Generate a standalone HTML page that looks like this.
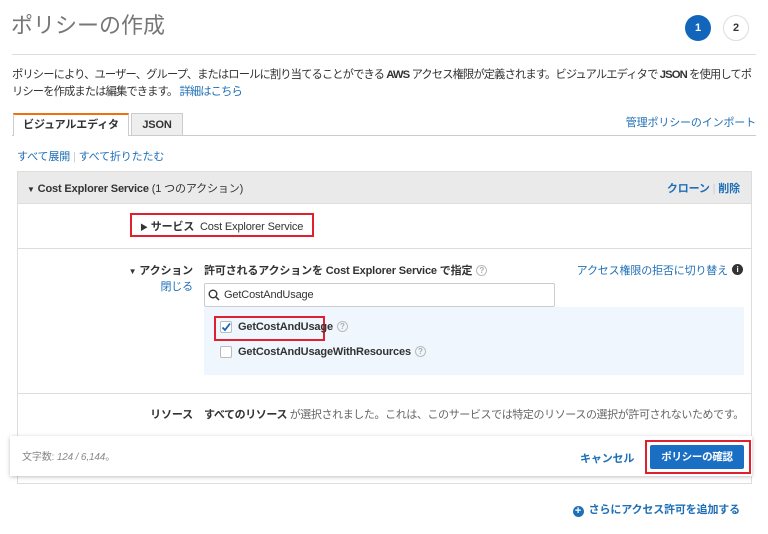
<!DOCTYPE html>
<html><head><meta charset="utf-8"><style>
*{margin:0;padding:0;box-sizing:border-box}
body{width:768px;height:534px;background:#fff;font-family:"Liberation Sans","Noto Sans CJK JP",sans-serif;color:#333;position:relative;overflow:hidden;font-size:11px;letter-spacing:-0.15px}
.a{position:absolute;white-space:nowrap}
.link{color:#1f6fb6}
.b{font-weight:bold}
.q{display:inline-block;width:11px;height:11px;border:1px solid #bbb;border-radius:50%;font-size:8px;color:#aaa;text-align:center;line-height:9px;vertical-align:1px;margin-left:4px;letter-spacing:0}
</style></head><body>
<div class="a" style="left:11px;top:8px;font-size:22px;color:#777;letter-spacing:0">ポリシーの作成</div>
<div class="a" style="left:685px;top:15px;width:26px;height:26px;border-radius:50%;background:#1166bb;color:#fff;font-size:11px;font-weight:bold;text-align:center;line-height:26px">1</div>
<div class="a" style="left:723px;top:15px;width:26px;height:26px;border-radius:50%;border:1px solid #ddd;color:#333;font-size:11px;font-weight:bold;text-align:center;line-height:24px">2</div>
<div class="a" style="left:12px;top:54px;width:744px;height:1px;background:#ddd"></div>
<div class="a" style="left:12px;top:67px;font-size:11.3px;line-height:17px;letter-spacing:-0.9px">ポリシーにより、ユーザー、グループ、またはロールに割り当てることができる <b>AWS</b> アクセス権限が定義されます。ビジュアルエディタで <b>JSON</b> を使用してポ<br>リシーを作成または編集できます。 <span class="link">詳細はこちら</span></div>
<div class="a" style="left:12px;top:135px;width:744px;height:1px;background:#ccc"></div>
<div class="a" style="left:13px;top:113px;width:116px;height:23px;border:1px solid #ccc;border-top:2px solid #ec7211;border-bottom:none;background:#fff;text-align:center;line-height:21px;font-weight:bold;font-size:11px">ビジュアルエディタ</div>
<div class="a" style="left:131px;top:113px;width:52px;height:22px;border:1px solid #ccc;border-bottom:none;background:#eee;text-align:center;line-height:22px;font-weight:bold;font-size:11px">JSON</div>
<div class="a link" style="right:12px;top:114px">管理ポリシーのインポート</div>
<div class="a link" style="left:17px;top:148px">すべて展開 <span style="color:#ccc">|</span> すべて折りたたむ</div>
<div class="a" style="left:17px;top:171px;width:735px;height:313px;border:1px solid #ddd"></div>
<div class="a" style="left:17px;top:171px;width:735px;height:33px;background:#eaeaea;border:1px solid #ddd"></div>
<div class="a b" style="left:27px;top:180px;font-size:11px"><span style="font-size:8px">▼</span> Cost Explorer Service <span style="font-weight:normal">(1 つのアクション)</span></div>
<div class="a b link" style="right:28px;top:180px">クローン <span style="color:#ccc;font-weight:normal">|</span> 削除</div>
<div class="a" style="left:130px;top:213px;width:184px;height:24px;border:2px solid #e0202e"></div>
<div class="a" style="left:140px;top:218px;font-size:11px"><span style="font-size:8px">▶</span> <b>サービス</b> &nbsp;Cost Explorer Service</div>
<div class="a" style="left:17px;top:248px;width:735px;height:1px;background:#ddd"></div>
<div class="a b" style="right:575px;top:262px"><span style="font-size:8px">▼</span> アクション</div>
<div class="a link" style="right:575px;top:278px">閉じる</div>
<div class="a b" style="left:204px;top:262px">許可されるアクションを Cost Explorer Service で指定<span class="q">?</span></div>
<div class="a link" style="right:40px;top:262px">アクセス権限の拒否に切り替え</div>
<div class="a" style="left:732px;top:264px;width:11px;height:11px;border-radius:50%;background:#333;color:#fff;font-size:8px;font-weight:bold;text-align:center;line-height:11px">i</div>
<div class="a" style="left:204px;top:283px;width:351px;height:24px;border:1px solid #ccc;border-radius:2px"></div>
<svg class="a" style="left:208px;top:289px" width="12" height="12" viewBox="0 0 12 12"><circle cx="5" cy="5" r="3.8" fill="none" stroke="#333" stroke-width="1.4"/><path d="M8 8l3 3" stroke="#333" stroke-width="1.5"/></svg>
<div class="a" style="left:224px;top:289px">GetCostAndUsage</div>
<div class="a" style="left:204px;top:307px;width:540px;height:68px;background:#eff6fd"></div>
<div class="a" style="left:214px;top:316px;width:111px;height:25px;border:2px solid #e0202e"></div>
<div class="a" style="left:220px;top:321px;width:12px;height:12px;border:1px solid #bbb;background:#fff;border-radius:2px"></div>
<svg class="a" style="left:220px;top:321px" width="12" height="12" viewBox="0 0 12 12"><path d="M2.5 6.5l2.5 2.5 5-6.5" fill="none" stroke="#1166bb" stroke-width="1.8"/></svg>
<div class="a b" style="left:238px;top:321px;font-size:11px">GetCostAndUsage<span class="q">?</span></div>
<div class="a" style="left:220px;top:346px;width:12px;height:12px;border:1px solid #bbb;background:#fff;border-radius:2px"></div>
<div class="a b" style="left:238px;top:346px;font-size:11px">GetCostAndUsageWithResources<span class="q">?</span></div>
<div class="a" style="left:17px;top:393px;width:735px;height:1px;background:#ddd"></div>
<div class="a" style="right:575px;top:406px;font-weight:bold">リソース</div>
<div class="a" style="left:204px;top:406px;color:#666;letter-spacing:-0.4px"><b style="color:#333">すべてのリソース</b> が選択されました。これは、このサービスでは特定のリソースの選択が許可されないためです。</div>
<div class="a" style="left:10px;top:436px;width:742px;height:40px;background:#fff;box-shadow:0 1px 4px rgba(0,0,0,.25)"></div>
<div class="a" style="left:22px;top:448px;font-size:10px;color:#888">文字数: <i>124 / 6,144</i>。</div>
<div class="a b link" style="left:580px;top:450px">キャンセル</div>
<div class="a" style="left:645px;top:440px;width:106px;height:34px;border:2px solid #e0202e"></div>
<div class="a b" style="left:650px;top:445px;width:94px;height:24px;background:#1a6ec4;border-radius:2px;color:#fff;text-align:center;line-height:24px;font-size:10.5px;letter-spacing:-0.3px">ポリシーの確認</div>
<div class="a b link" style="right:28px;top:501px"><span style="display:inline-block;width:11px;height:11px;border-radius:50%;background:#1f6fb6;color:#fff;font-size:11px;text-align:center;line-height:11px;letter-spacing:0;margin-right:5px;vertical-align:-1px">+</span>さらにアクセス許可を追加する</div>
</body></html>
